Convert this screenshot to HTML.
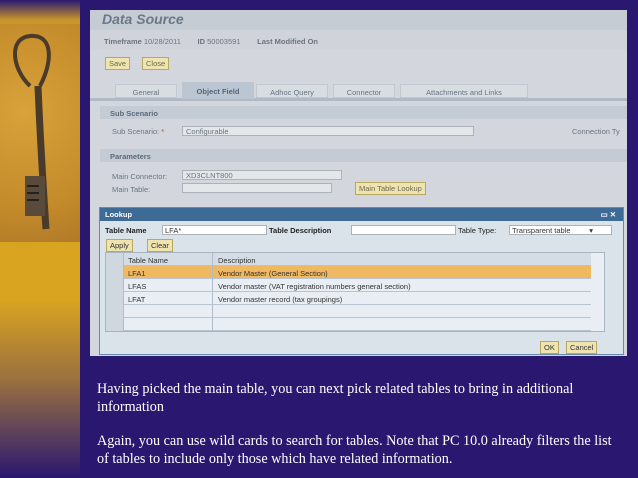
<!DOCTYPE html>
<html><head><style>
*{margin:0;padding:0;box-sizing:border-box}
body{width:638px;height:478px;background:#2a1870;position:relative;overflow:hidden;font-family:"Liberation Sans",sans-serif}
.strip{position:absolute;left:0;top:0;width:80px;height:478px;background:linear-gradient(#2a1870 0px,#c8962a 20px,#d9a420 250px,#d9a420 300px,#9a7040 380px,#2a1870 478px)}
.photo{position:absolute;left:0;top:24px;width:80px;height:218px;background:radial-gradient(circle at 30% 40%,#d9a23a,#c38a2a 70%,#b07a28)}
.ss{position:absolute;left:90px;top:10px;width:537px;height:346px;background:#d3d7dd;overflow:hidden;font-size:7.5px;color:#6a7480}
.a{position:absolute;white-space:nowrap}
.btn{position:absolute;background:#efe4b0;border:1px solid #b8a860;font-size:7.5px;color:#6a6a50;padding:1px 3px}
.inp{position:absolute;background:#e4e7ea;border:1px solid #aab2ba;height:10px}
.hdr{position:absolute;left:10px;right:0;height:13px;background:#c4cbd4;font-weight:bold;color:#5a6a7a;padding:3px 10px;font-size:7.5px}
.dlg{position:absolute;left:9px;top:197px;width:525px;height:148px;background:#dbe3ea;border:1px solid #6a8aa8}
.bar{height:13px;background:#3e6a96;color:#fff;font-weight:bold;padding:2px 5px;font-size:7.5px}
.d{color:#222}
.row{position:absolute;left:6px;width:485px;height:13px;border-bottom:1px solid #b8c4d0;background:#e8eef3;color:#333}
.row span{position:absolute;top:3px}
.text{position:absolute;left:97px;color:#fff;font-family:"Liberation Serif",serif;font-size:14.2px;line-height:17.5px;white-space:nowrap}
</style></head><body>
<div class="strip"></div>
<div class="photo">
<svg width="80" height="218" viewBox="0 0 80 218"><path d="M30 62 C12 45 8 14 30 12 C52 10 54 35 40 62" fill="none" stroke="#4a3a2a" stroke-width="4"/><path d="M38 62 C40 110 43 160 46 205" stroke="#4a3a2a" stroke-width="7" fill="none"/><rect x="25" y="152" width="20" height="40" fill="#5a4a3a"/><path d="M27 162h12M27 169h12M27 176h12" stroke="#222" stroke-width="2"/></svg>
</div>
<div class="ss">
<div style="position:absolute;left:0;top:0;right:0;height:20px;background:#c6ccd4"></div>
<div class="a" style="left:12px;top:1px;font-size:14px;font-weight:bold;font-style:italic;color:#6a7888">Data Source</div>
<div style="position:absolute;left:0;top:20px;right:0;height:20px;background:#d0d4da"></div>
<div class="a" style="left:14px;top:27px"><b>Timeframe</b> 10/28/2011 &nbsp;&nbsp;&nbsp;&nbsp;&nbsp;&nbsp; <b>ID</b> 50003591 &nbsp;&nbsp;&nbsp;&nbsp;&nbsp;&nbsp; <b>Last Modified On</b></div>
<div class="btn" style="left:15px;top:47px">Save</div><div class="btn" style="left:52px;top:47px">Close</div>
<div style="position:absolute;left:0;top:88px;right:0;height:3px;background:#b0bac6"></div>
<div class="a" style="left:25px;top:74px;width:62px;height:14px;background:#d8dde2;border:1px solid #c0c8d0;text-align:center;padding-top:3px">General</div>
<div class="a" style="left:92px;top:72px;width:72px;height:17px;background:#bcc6d2;text-align:center;padding-top:5px;font-weight:bold;color:#55657a">Object Field</div>
<div class="a" style="left:166px;top:74px;width:72px;height:14px;background:#d8dde2;border:1px solid #c0c8d0;text-align:center;padding-top:3px">Adhoc Query</div>
<div class="a" style="left:243px;top:74px;width:62px;height:14px;background:#d8dde2;border:1px solid #c0c8d0;text-align:center;padding-top:3px">Connector</div>
<div class="a" style="left:310px;top:74px;width:128px;height:14px;background:#d8dde2;border:1px solid #c0c8d0;text-align:center;padding-top:3px">Attachments and Links</div>
<div class="hdr" style="top:96px">Sub Scenario</div>
<div class="a" style="left:22px;top:117px">Sub Scenario: <span style="color:#c44">*</span></div>
<div class="inp" style="left:92px;top:116px;width:292px;padding-left:3px;font-size:7.5px">Configurable</div>
<div class="a" style="left:482px;top:117px">Connection Ty</div>
<div class="hdr" style="top:139px">Parameters</div>
<div class="a" style="left:22px;top:162px">Main Connector:</div>
<div class="inp" style="left:92px;top:160px;width:160px;padding-left:3px;font-size:7.5px">XD3CLNT800</div>
<div class="a" style="left:22px;top:175px">Main Table:</div>
<div class="inp" style="left:92px;top:173px;width:150px"></div>
<div class="btn" style="left:265px;top:172px">Main Table Lookup</div>
<div class="dlg">
<div class="bar">Lookup<span style="float:right;letter-spacing:2px">▭✕</span></div>
<div class="a d" style="left:5px;top:18px;font-weight:bold">Table Name</div>
<div class="inp" style="left:62px;top:17px;width:105px;background:#fff;color:#333;padding-left:2px">LFA*</div>
<div class="a d" style="left:169px;top:18px;font-weight:bold">Table Description</div>
<div class="inp" style="left:251px;top:17px;width:105px;background:#fff"></div>
<div class="a d" style="left:358px;top:18px">Table Type:</div>
<div class="inp" style="left:409px;top:17px;width:103px;background:#fff;color:#333;padding-left:2px">Transparent table &nbsp;&nbsp;&nbsp;&nbsp;&nbsp;&nbsp;&nbsp;&nbsp;▾</div>
<div class="btn" style="left:6px;top:31px;color:#333">Apply</div><div class="btn" style="left:47px;top:31px;color:#333">Clear</div>
<div style="position:absolute;left:5px;top:44px;width:500px;height:80px;border:1px solid #a8b4c0;background:#e8eef3"></div>
<div class="row" style="top:45px;background:#d4dde6"><span style="left:22px">Table Name</span><span style="left:112px">Description</span></div>
<div class="row" style="top:58px;background:#f0b860"><span style="left:22px">LFA1</span><span style="left:112px">Vendor Master (General Section)</span></div>
<div class="row" style="top:71px"><span style="left:22px">LFAS</span><span style="left:112px">Vendor master (VAT registration numbers general section)</span></div>
<div class="row" style="top:84px"><span style="left:22px">LFAT</span><span style="left:112px">Vendor master record (tax groupings)</span></div>
<div class="row" style="top:97px"></div>
<div class="row" style="top:110px"></div>
<div style="position:absolute;left:6px;top:45px;width:18px;height:78px;background:#cfd7df;border-right:1px solid #b0bcc8"></div>
<div style="position:absolute;left:112px;top:45px;width:1px;height:78px;background:#b0bcc8"></div>
<div class="btn" style="left:440px;top:133px;color:#333">OK</div><div class="btn" style="left:466px;top:133px;color:#333">Cancel</div>
</div>
</div>
<div class="text" style="top:381px">Having picked the main table, you can next pick related tables to bring in additional<br>information</div>
<div class="text" style="top:433px">Again, you can use wild cards to search for tables. Note that PC 10.0 already filters the list<br>of tables to include only those which have related information.</div>
</body></html>
